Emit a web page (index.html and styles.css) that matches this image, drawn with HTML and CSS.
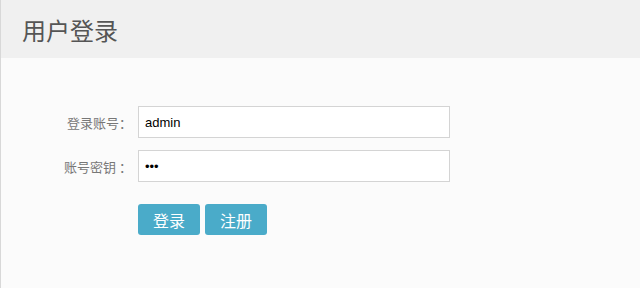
FILE: index.html
```html
<!DOCTYPE html>
<html lang="zh-CN">
<head>
  <meta charset="UTF-8">
  <meta name="viewport" content="width=device-width, initial-scale=1.0">
  <link rel="stylesheet" href="styles.css">
</head>
<body>
  <div class="page">
    <div class="page-header">
      <h1>用户登录</h1>
    </div>
    <form class="login-form" onsubmit="return false">
      <div class="form-row">
        <label for="account">登录账号：</label>
        <input type="text" id="account" value="admin">
      </div>
      <div class="form-row">
        <label for="secret">账号密钥 ：</label>
        <input type="password" id="secret" value="123">
      </div>
      <div class="form-actions">
        <button type="submit" class="btn">登录</button>
        <button type="button" class="btn">注册</button>
      </div>
    </form>
  </div>
</body>
</html>
```

FILE: styles.css
```css
html, body {
  margin: 0;
  height: 100%;
}
body {
  font-family: "Liberation Sans", "Noto Sans CJK SC", sans-serif;
  background-color: #fbfbfb;
}
.page {
  min-height: 100%;
  border-left: 1px solid #d8d8d8;
  box-sizing: border-box;
}
.page-header {
  background-color: #f0f0f0;
  height: 58px;
  padding-left: 21px;
  display: flex;
  align-items: center;
}
.page-header h1 {
  margin: 0;
  font-family: "Noto Sans CJK SC", sans-serif;
  font-size: 24px;
  font-weight: normal;
  color: #555;
}
.login-form {
  padding-top: 48px;
}
.form-row {
  display: flex;
  align-items: center;
  margin-bottom: 12px;
}
.form-row label {
  width: 131px;
  padding-right: 6px;
  text-align: right;
  font-family: "Noto Sans CJK SC", sans-serif;
  font-size: 13px;
  color: #777;
}
.form-row input {
  width: 312px;
  height: 32px;
  box-sizing: border-box;
  border: 1px solid #d4d4d4;
  background: #fff;
  padding: 0 6px;
  font-family: "Liberation Sans", sans-serif;
  font-size: 13px;
  color: #000;
  outline: none;
}
.form-actions {
  padding-left: 137px;
  padding-top: 10px;
  display: flex;
  gap: 5px;
}
.btn {
  width: 62px;
  height: 31px;
  border: none;
  border-radius: 3px;
  background-color: #4aabc9;
  color: #fff;
  font-family: "Noto Sans CJK SC", sans-serif;
  font-size: 16px;
  cursor: pointer;
  padding: 0;
}
```
